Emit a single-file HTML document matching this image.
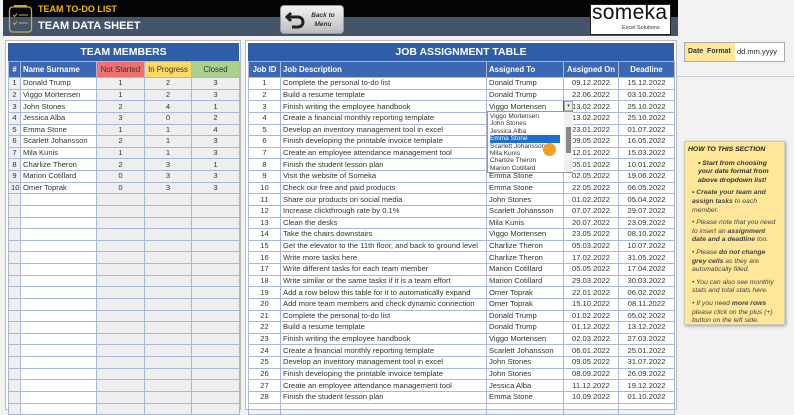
<!DOCTYPE html>
<html><head><meta charset="utf-8"><style>
*{box-sizing:border-box;margin:0;padding:0}
body{width:794px;height:407px;overflow:hidden;background:#f2f2f2;font-family:"Liberation Sans",sans-serif;position:relative;font-size:7.6px;color:#333}
.abs{position:absolute}
table{border-collapse:collapse;table-layout:fixed;position:absolute}
td{border:1px solid #a9b7d8;height:11.63px;padding:0 2px;white-space:nowrap;overflow:hidden;line-height:10px}
.c{text-align:center}
.g{background:#efefef}
.w{background:#fff}
.hd td{background:#3b67b3;color:#fff;font-weight:bold;height:16px;font-size:7.8px}
.ttl{background:#2f5da8;color:#fff;font-weight:bold;font-size:10.5px;text-align:center;line-height:18px}
</style></head><body>
<div class="abs" style="left:3px;top:0;width:675px;height:17px;background:#050505"></div>
<div class="abs" style="left:3px;top:17px;width:675px;height:19px;background:#44546a"></div>
<svg class="abs" style="left:8px;top:3px" width="25" height="31" viewBox="0 0 25 31"><rect x="1.5" y="4" width="22" height="25" rx="3" fill="none" stroke="#c9a94a" stroke-width="1.3"/><path d="M6 3h13" stroke="#c9a94a" stroke-width="2"/><path d="M5 12l1.5 1.5 2.5-3M11 12h9M5 20l1.5 1.5 2.5-3M11 20h9" stroke="#c9a94a" stroke-width="1" fill="none"/></svg>
<div class="abs" style="left:38px;top:4px;color:#f5b800;font-weight:bold;font-size:9px">TEAM TO-DO LIST</div>
<div class="abs" style="left:38px;top:20px;color:#fff;font-weight:bold;font-size:11px">TEAM DATA SHEET</div>
<div class="abs" style="left:280px;top:5px;width:64px;height:29px;border-radius:4px;background:linear-gradient(#f2f2f2,#bcbcbc);border:1px solid #999"></div>
<svg class="abs" style="left:285px;top:9px" width="22" height="22" viewBox="0 0 22 22"><path d="M6 4L2 8l4 4M2 8h11a5 5 0 0 1 0 10H7" fill="none" stroke="#222" stroke-width="3"/></svg>
<div class="abs" style="left:308px;top:11px;font-size:6.5px;font-style:italic;font-weight:bold;color:#333;text-align:center;width:30px;line-height:9px">Back to<br>Menu</div>
<div class="abs" style="left:590px;top:4px;width:81px;height:31px;background:#fff;border:1px solid #222"></div>
<div class="abs" style="left:592px;top:1px;font-size:21px;color:#111;letter-spacing:0.3px">someka</div>
<div class="abs" style="left:622px;top:25px;font-size:5.5px;color:#333">Excel Solutions</div>
<div class="abs" style="left:5px;top:40px;width:236px;height:370px;border:1px solid #bbb;background:#fff"></div>
<div class="abs" style="left:245px;top:40px;width:432px;height:370px;border:1px solid #bbb;background:#fff"></div>
<div class="abs" style="left:677px;top:76px;width:117px;height:1px;background:#ccc"></div>
<div class="abs ttl" style="left:8px;top:43px;width:231px">TEAM MEMBERS</div>
<div class="abs ttl" style="left:248px;top:43px;width:426px">JOB ASSIGNMENT TABLE</div>
<table style="left:8px;top:61px;width:231px">
<colgroup><col style="width:12px"><col style="width:76px"><col style="width:48px"><col style="width:47px"><col style="width:48px"></colgroup>
<tr class="hd"><td class="c">#</td><td>Name Surname</td><td class="c" style="background:#f07070;color:#333;font-weight:normal">Not Started</td><td class="c" style="background:#ffd966;color:#333;font-weight:normal">In Progress</td><td class="c" style="background:#a9d08e;color:#333;font-weight:normal">Closed</td></tr>
<tr><td class="c g">1</td><td class="w">Donald Trump</td><td class="c g">1</td><td class="c g">2</td><td class="c g">3</td></tr>
<tr><td class="c g">2</td><td class="w">Viggo Mortensen</td><td class="c g">1</td><td class="c g">2</td><td class="c g">3</td></tr>
<tr><td class="c g">3</td><td class="w">John Stones</td><td class="c g">2</td><td class="c g">4</td><td class="c g">1</td></tr>
<tr><td class="c g">4</td><td class="w">Jessica Alba</td><td class="c g">3</td><td class="c g">0</td><td class="c g">2</td></tr>
<tr><td class="c g">5</td><td class="w">Emma Stone</td><td class="c g">1</td><td class="c g">1</td><td class="c g">4</td></tr>
<tr><td class="c g">6</td><td class="w">Scarlett Johansson</td><td class="c g">2</td><td class="c g">1</td><td class="c g">3</td></tr>
<tr><td class="c g">7</td><td class="w">Mila Kunis</td><td class="c g">1</td><td class="c g">1</td><td class="c g">3</td></tr>
<tr><td class="c g">8</td><td class="w">Charlize Theron</td><td class="c g">2</td><td class="c g">3</td><td class="c g">1</td></tr>
<tr><td class="c g">9</td><td class="w">Marion Cotillard</td><td class="c g">0</td><td class="c g">3</td><td class="c g">3</td></tr>
<tr><td class="c g">10</td><td class="w">Omer Toprak</td><td class="c g">0</td><td class="c g">3</td><td class="c g">3</td></tr>
<tr><td class="g"></td><td class="w"></td><td class="g"></td><td class="g"></td><td class="g"></td></tr>
<tr><td class="g"></td><td class="w"></td><td class="g"></td><td class="g"></td><td class="g"></td></tr>
<tr><td class="g"></td><td class="w"></td><td class="g"></td><td class="g"></td><td class="g"></td></tr>
<tr><td class="g"></td><td class="w"></td><td class="g"></td><td class="g"></td><td class="g"></td></tr>
<tr><td class="g"></td><td class="w"></td><td class="g"></td><td class="g"></td><td class="g"></td></tr>
<tr><td class="g"></td><td class="w"></td><td class="g"></td><td class="g"></td><td class="g"></td></tr>
<tr><td class="g"></td><td class="w"></td><td class="g"></td><td class="g"></td><td class="g"></td></tr>
<tr><td class="g"></td><td class="w"></td><td class="g"></td><td class="g"></td><td class="g"></td></tr>
<tr><td class="g"></td><td class="w"></td><td class="g"></td><td class="g"></td><td class="g"></td></tr>
<tr><td class="g"></td><td class="w"></td><td class="g"></td><td class="g"></td><td class="g"></td></tr>
<tr><td class="g"></td><td class="w"></td><td class="g"></td><td class="g"></td><td class="g"></td></tr>
<tr><td class="g"></td><td class="w"></td><td class="g"></td><td class="g"></td><td class="g"></td></tr>
<tr><td class="g"></td><td class="w"></td><td class="g"></td><td class="g"></td><td class="g"></td></tr>
<tr><td class="g"></td><td class="w"></td><td class="g"></td><td class="g"></td><td class="g"></td></tr>
<tr><td class="g"></td><td class="w"></td><td class="g"></td><td class="g"></td><td class="g"></td></tr>
<tr><td class="g"></td><td class="w"></td><td class="g"></td><td class="g"></td><td class="g"></td></tr>
<tr><td class="g"></td><td class="w"></td><td class="g"></td><td class="g"></td><td class="g"></td></tr>
<tr><td class="g"></td><td class="w"></td><td class="g"></td><td class="g"></td><td class="g"></td></tr>
<tr><td class="g"></td><td class="w"></td><td class="g"></td><td class="g"></td><td class="g"></td></tr>
</table>
<table style="left:248px;top:61px;width:426px">
<colgroup><col style="width:32px"><col style="width:206px"><col style="width:77px"><col style="width:55px"><col style="width:56px"></colgroup>
<tr class="hd"><td class="c">Job ID</td><td>Job Description</td><td>Assigned To</td><td class="c">Assigned On</td><td class="c">Deadline</td></tr>
<tr><td class="c">1</td><td>Complete the personal to-do list</td><td>Donald Trump</td><td class="c">09.12.2022</td><td class="c">15.12.2022</td></tr>
<tr><td class="c">2</td><td>Build a resume template</td><td>Donald Trump</td><td class="c">22.06.2022</td><td class="c">03.10.2022</td></tr>
<tr><td class="c">3</td><td>Finish writing the employee handbook</td><td style="border:1px solid #217346">Viggo Mortensen</td><td class="c">13.02.2022</td><td class="c">25.10.2022</td></tr>
<tr><td class="c">4</td><td>Create a financial monthly reporting template</td><td>Scarlett Johansson</td><td class="c">13.02.2022</td><td class="c">25.10.2022</td></tr>
<tr><td class="c">5</td><td>Develop an inventory management tool in excel</td><td>John Stones</td><td class="c">23.01.2022</td><td class="c">01.07.2022</td></tr>
<tr><td class="c">6</td><td>Finish developing the printable invoice template</td><td>Jessica Alba</td><td class="c">09.05.2022</td><td class="c">16.05.2022</td></tr>
<tr><td class="c">7</td><td>Create an employee attendance management tool</td><td>Mila Kunis</td><td class="c">12.01.2022</td><td class="c">15.03.2022</td></tr>
<tr><td class="c">8</td><td>Finish the student lesson plan</td><td>Charlize Theron</td><td class="c">05.01.2022</td><td class="c">10.01.2022</td></tr>
<tr><td class="c">9</td><td>Visit the website of Someka</td><td>Emma Stone</td><td class="c">02.05.2022</td><td class="c">19.06.2022</td></tr>
<tr><td class="c">10</td><td>Check our free and paid products</td><td>Emma Stone</td><td class="c">22.05.2022</td><td class="c">06.05.2022</td></tr>
<tr><td class="c">11</td><td>Share our products on social media</td><td>John Stones</td><td class="c">01.02.2022</td><td class="c">05.04.2022</td></tr>
<tr><td class="c">12</td><td>Increase clickthrough rate by 0.1%</td><td>Scarlett Johansson</td><td class="c">07.07.2022</td><td class="c">29.07.2022</td></tr>
<tr><td class="c">13</td><td>Clean the desks</td><td>Mila Kunis</td><td class="c">20.07.2022</td><td class="c">23.09.2022</td></tr>
<tr><td class="c">14</td><td>Take the chairs downstairs</td><td>Viggo Mortensen</td><td class="c">23.05.2022</td><td class="c">08.10.2022</td></tr>
<tr><td class="c">15</td><td>Get the elevator to the 11th floor, and back to ground level</td><td>Charlize Theron</td><td class="c">05.03.2022</td><td class="c">10.07.2022</td></tr>
<tr><td class="c">16</td><td>Write more tasks here</td><td>Charlize Theron</td><td class="c">17.02.2022</td><td class="c">31.05.2022</td></tr>
<tr><td class="c">17</td><td>Write different tasks for each team member</td><td>Marion Cotillard</td><td class="c">05.05.2022</td><td class="c">17.04.2022</td></tr>
<tr><td class="c">18</td><td>Write similar or the same tasks if it is a team effort</td><td>Marion Cotillard</td><td class="c">29.03.2022</td><td class="c">30.03.2022</td></tr>
<tr><td class="c">19</td><td>Add a row below this table for it to automatically expand</td><td>Omer Toprak</td><td class="c">22.01.2022</td><td class="c">06.02.2022</td></tr>
<tr><td class="c">20</td><td>Add more team members and check dynamic connection</td><td>Omer Toprak</td><td class="c">15.10.2022</td><td class="c">08.11.2022</td></tr>
<tr><td class="c">21</td><td>Complete the personal to-do list</td><td>Donald Trump</td><td class="c">01.02.2022</td><td class="c">05.02.2022</td></tr>
<tr><td class="c">22</td><td>Build a resume template</td><td>Donald Trump</td><td class="c">01.12.2022</td><td class="c">13.12.2022</td></tr>
<tr><td class="c">23</td><td>Finish writing the employee handbook</td><td>Viggo Mortensen</td><td class="c">02.03.2022</td><td class="c">27.03.2022</td></tr>
<tr><td class="c">24</td><td>Create a financial monthly reporting template</td><td>Scarlett Johansson</td><td class="c">06.01.2022</td><td class="c">25.01.2022</td></tr>
<tr><td class="c">25</td><td>Develop an inventory management tool in excel</td><td>John Stones</td><td class="c">09.05.2022</td><td class="c">31.07.2022</td></tr>
<tr><td class="c">26</td><td>Finish developing the printable invoice template</td><td>John Stones</td><td class="c">08.09.2022</td><td class="c">26.09.2022</td></tr>
<tr><td class="c">27</td><td>Create an employee attendance management tool</td><td>Jessica Alba</td><td class="c">11.12.2022</td><td class="c">19.12.2022</td></tr>
<tr><td class="c">28</td><td>Finish the student lesson plan</td><td>Emma Stone</td><td class="c">10.09.2022</td><td class="c">01.10.2022</td></tr>
<tr><td></td><td></td><td></td><td></td><td></td></tr>
</table>
<div class="abs" style="left:564px;top:101px;width:9px;height:10px;background:#eee;border:1px solid #aaa;font-size:5px;text-align:center;line-height:8px">▾</div>
<div class="abs" style="left:487px;top:111px;width:86px;height:62px;background:#fff;border:1px solid #999;font-size:6.5px;line-height:7.4px;padding:1px 2px;color:#333">
Viggo Mortensen<br>John Stones<br>Jessica Alba<br><span style="display:block;background:#1e6fd0;color:#fff;width:70px">Emma Stone</span>Scarlett Johansson<br>Mila Kunis<br>Charlize Theron<br>Marion Cotillard
<div class="abs" style="left:76px;top:0;width:9px;height:60px;background:#f0f0f0"></div>
<div class="abs" style="left:78px;top:15px;width:5px;height:26px;background:#888"></div>
</div>
<div class="abs" style="left:543px;top:143px;width:13px;height:13px;border-radius:50%;background:#f0a020"></div>
<div class="abs" style="left:684px;top:42px;width:101px;height:20px;border:1px solid #aaa;background:#fff"></div>
<div class="abs" style="left:685px;top:43px;width:50px;height:18px;background:#ffe699;font-size:7px;font-weight:bold;color:#333;line-height:18px;padding-left:3px">Date&nbsp; Format</div>
<div class="abs" style="left:737px;top:43px;font-size:7.5px;line-height:18px;color:#222">dd.mm.yyyy</div>
<div class="abs" style="left:684px;top:141px;width:101px;height:184px;background:#ffe699;border:1px solid #ccb;box-shadow:1px 1px 3px #999;font-size:6.8px;font-style:italic;color:#444;line-height:8.6px;padding:4px 3px">
<b style="color:#222">HOW TO THIS SECTION</b>
<div style="margin-top:5px;padding-left:10px;font-weight:bold;color:#333">• Start from choosing your date format from above dropdown list!</div>
<div style="margin-top:4px;padding-left:4px"><b>• Create your team and assign tasks</b> to each member.</div>
<div style="margin-top:4px;padding-left:4px">• Please note that you need to insert an <b>assignment date and a deadline</b> too.</div>
<div style="margin-top:4px;padding-left:4px">• Please <b>do not change grey cells</b> as they are automatically filled.</div>
<div style="margin-top:4px;padding-left:4px">• You can also see monthly stats and total stats here.</div>
<div style="margin-top:4px;padding-left:4px">• If you need <b>more rows</b> please click on the plus (+) button on the left side.</div>
</div>
</body></html>
